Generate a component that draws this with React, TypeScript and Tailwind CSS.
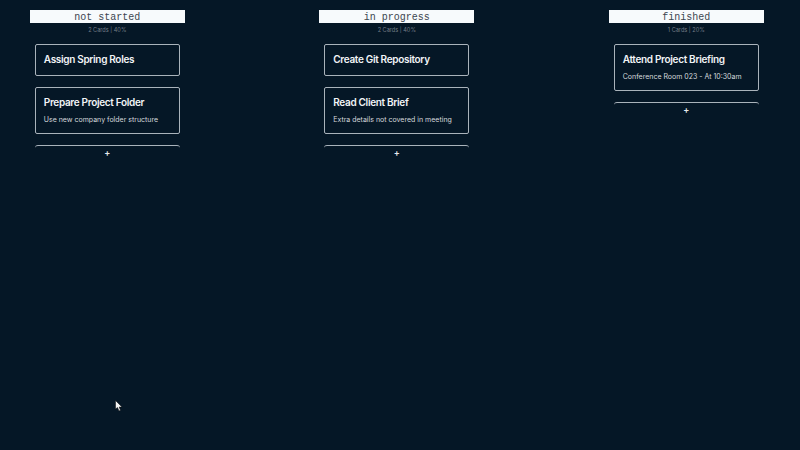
function Card({ title, sub }: { title: string; sub?: string }) {
  return (
    <div className="mb-[11px] flex flex-col rounded-[2px] border border-[#aab3bb] px-2 pt-[8px] pb-[9px]">
      <div className="text-[10px] leading-[13px] font-semibold tracking-[-0.32px] whitespace-nowrap text-[#f2f4f6]">{title}</div>
      {sub && <div className="mt-[6px] -mb-[1px] text-[7px] leading-[10px] whitespace-nowrap text-[#d5d9dd]">{sub}</div>}
    </div>
  );
}

function Column({ title, meta, cards }: { title: string; meta: string; cards: { title: string; sub?: string }[] }) {
  return (
    <div className="w-[155px] shrink-0">
      <div className="h-[13px] bg-[#f7fafc] text-center font-['Liberation_Mono',monospace] text-[10px] leading-[15px] font-normal text-[#3c4650]">
        {title}
      </div>
      <div className="mt-[3px] h-[8px] text-center text-[5.6px] leading-[8px] text-[#737d87]">{meta}</div>
      <div className="mt-[10px] px-[5px]">
        {cards.map((c) => (
          <Card key={c.title} title={c.title} sub={c.sub} />
        ))}
        <div className="mt-[1px] h-[14px] rounded-t-[3px] border-t border-[#aab3bb] text-center text-[9px] leading-[14px] font-semibold text-[#e8ebee]">
          +
        </div>
      </div>
    </div>
  );
}

export default function App() {
  return (
    <div className="relative h-[450px] w-[800px] overflow-hidden bg-[#051726] font-['Inter',sans-serif]">
      <div className="flex gap-[134.5px] pt-[10px] pl-[29.75px]">
        <Column
          title="not started"
          meta="2 Cards | 40%"
          cards={[{ title: "Assign Spring Roles" }, { title: "Prepare Project Folder", sub: "Use new company folder structure" }]}
        />
        <Column
          title="in progress"
          meta="2 Cards | 40%"
          cards={[{ title: "Create Git Repository" }, { title: "Read Client Brief", sub: "Extra details not covered in meeting" }]}
        />
        <Column
          title="finished"
          meta="1 Cards | 20%"
          cards={[{ title: "Attend Project Briefing", sub: "Conference Room 023 - At 10:30am" }]}
        />
      </div>
      <svg className="absolute top-[400px] left-[115px]" width="8" height="12" viewBox="0 0 8 12">
        <path d="M0.5 0.5 L0.5 9 L2.5 7.5 L4 11 L5.5 10.3 L4.2 7 L7 7 Z" fill="#f4f4f4" stroke="#0a0a0a" strokeWidth="0.5" />
      </svg>
    </div>
  );
}
